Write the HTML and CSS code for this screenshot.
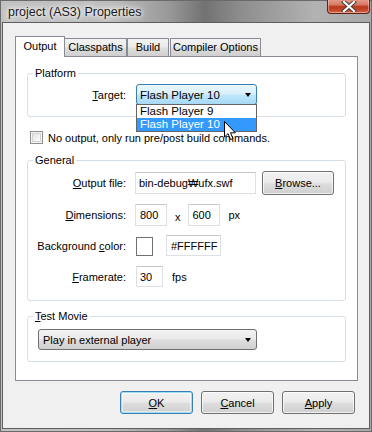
FILE: index.html
```html
<!DOCTYPE html>
<html>
<head>
<meta charset="utf-8">
<link rel="stylesheet" href="styles.css">
</head>
<body>
<div class="window">
  <div class="titlebar">
    <span class="title">project (AS3) Properties</span>
    <span class="close"><svg width="16" height="11" viewBox="0 0 16 11"><path d="M3 1 L13 10 M13 1 L3 10" stroke="#3a3a3a" stroke-width="4" stroke-linecap="square"/><path d="M3 1 L13 10 M13 1 L3 10" stroke="#ffffff" stroke-width="2.2" stroke-linecap="square"/></svg></span>
  </div>
  <div class="client">
    <div class="tabs">
      <div class="tab active">Output</div>
      <div class="tab t-class">Classpaths</div>
      <div class="tab t-build">Build</div>
      <div class="tab t-comp">Compiler Options</div>
    </div>
    <div class="panel">
      <fieldset class="group platform">
        <legend>Platform</legend>
        <div class="row">
          <span class="lbl"><u>T</u>arget:</span>
          <div class="combo-wrap">
            <div class="combo hot"><span>Flash Player 10</span><span class="arrow"></span></div>
            <div class="droplist">
              <div class="item">Flash Player 9</div>
              <div class="item sel">Flash Player 10</div>
            </div>
            <svg class="cursor" width="13" height="20" viewBox="0 0 13 20"><path d="M0.5 0.5 L0.5 16 L4 12.6 L6.6 18.6 L9 17.6 L6.5 11.8 L11.4 11.8 Z" fill="#ffffff" stroke="#000000" stroke-width="1"/></svg>
          </div>
        </div>
      </fieldset>
      <div class="check-row"><span class="checkbox"></span><span>No output, only run pre/post build commands.</span></div>
      <fieldset class="group general">
        <legend>General</legend>
        <div class="row r1">
          <span class="lbl"><u>O</u>utput file:</span>
          <div class="input w-file">bin-debug₩ufx.swf</div>
          <div class="btn browse"><u>B</u>rowse...</div>
        </div>
        <div class="row r2">
          <span class="lbl"><u>D</u>imensions:</span>
          <div class="input w-num">800</div>
          <span class="unit-x">x</span>
          <div class="input w-num">600</div>
          <span class="unit-px">px</span>
        </div>
        <div class="row r3">
          <span class="lbl">Background <u>c</u>olor:</span>
          <div class="swatch"></div>
          <div class="input w-color">#FFFFFF</div>
        </div>
        <div class="row r4">
          <span class="lbl"><u>F</u>ramerate:</span>
          <div class="input w-fps">30</div>
          <span class="unit-fps">fps</span>
        </div>
      </fieldset>
      <fieldset class="group test">
        <legend><u>T</u>est Movie</legend>
        <div class="test-body">
          <div class="combo normal"><span>Play in external player</span><span class="arrow"></span></div>
        </div>
      </fieldset>
    </div>
    <div class="buttons">
      <div class="btn dlg default"><u>O</u>K</div>
      <div class="btn dlg"><u>C</u>ancel</div>
      <div class="btn dlg"><u>A</u>pply</div>
    </div>
  </div>
</div>
</body>
</html>
```
FILE: styles.css
```css
* { box-sizing: border-box; }
html, body { margin: 0; padding: 0; }
body {
  width: 372px; height: 432px; overflow: hidden;
  font-family: "Liberation Sans", Arial, sans-serif;
  font-size: 11px; color: #000;
}
u { text-decoration: underline; text-underline-offset: 1px; }
.window {
  width: 372px; height: 432px;
  display: flex; flex-direction: column;
  background: linear-gradient(90deg, #c2c2c2 0%, #bcbcbc 30%, #9a9a9a 45%, #727272 55%, #8e8e8e 65%, #b2b2b2 85%, #a8a8a8 100%);
  border: 1px solid #6a6a6a;
}
.titlebar {
  height: 21px; flex: none;
  display: flex; justify-content: space-between; align-items: flex-start;
  padding-left: 7px;
}
.title {
  font-size: 12.5px; line-height: 20px; color: #1a1a1a; margin-top: 1px;
  text-shadow: 0 0 6px #f4f4f4, 0 0 10px #ffffff, 0 0 3px #ffffff;
  white-space: nowrap;
}
.close {
  width: 43px; height: 15px; margin-top: -2px; margin-right: 1px;
  border: 1px solid #5a2418; border-top: none;
  border-radius: 0 0 4px 4px;
  background: linear-gradient(#e6a08e 0%, #d77b66 40%, #bb3a1f 55%, #c4492c 80%, #d86a4c 100%);
  box-shadow: inset 0 0 0 1px rgba(255,210,200,0.5);
  display: flex; align-items: center; justify-content: center;
}
.close svg { display: block; margin-top: 1px; }
.client {
  flex: 1;
  margin: 0 1px 2px 1px;
  border: 1px solid #5e5e5e;
  background: #f0f0f0;
  padding: 13px 11px 0 12px;
  display: flex; flex-direction: column;
}
.tabs {
  display: flex; align-items: flex-end; height: 20px;
  position: relative; z-index: 2;
}
.tab {
  height: 18px;
  border: 1px solid #898c95; border-bottom: none;
  background: linear-gradient(#f2f2f2, #ebebeb 45%, #dddddd 55%, #cfcfcf);
  line-height: 17px;
  text-align: center;
  white-space: nowrap;
  margin-left: -1px;
}
.tab.active {
  width: 50px; height: 21px; margin-left: 0;
  margin-bottom: -1px;
  background: #ffffff;
  line-height: 19px;
  position: relative; z-index: 3;
}
.t-class { width: 63px; }
.t-build { width: 42px; margin-left: 0; }
.t-comp { width: 91px; margin-left: 1px; }
.panel {
  height: 325px;
  background: #ffffff;
  border: 1px solid #898c95;
  padding: 0 11px;
  position: relative; z-index: 1;
}
.group {
  margin: 0; padding: 0;
  border: 1px solid #d5dfe5;
  border-radius: 3px;
  min-width: 0;
}
.group legend {
  margin-left: 5px; padding: 0 2px;
  line-height: 14px;
}
.platform { margin-top: 9px; padding: 4px 0 11px 0; }
.row { display: flex; align-items: center; white-space: nowrap; }
.lbl { width: 98px; text-align: right; margin-right: 10px; flex: none; }
.combo-wrap { position: relative; }
.combo {
  height: 21px;
  display: flex; align-items: center; justify-content: space-between;
  padding: 0 5px 0 3px;
  border-radius: 3px;
}
.combo.hot {
  width: 121px;
  border: 1px solid #3c7fb1;
  background: linear-gradient(#eaf6fd 0%, #d9f0fc 45%, #bee6fd 55%, #a7d9f5 100%);
}
.combo.normal {
  width: 219px;
  border: 1px solid #707070;
  background: linear-gradient(#f2f2f2 0%, #ebebeb 45%, #dddddd 55%, #cfcfcf 100%);
  padding-left: 4px;
}
.arrow {
  width: 0; height: 0;
  border-left: 3.5px solid transparent; border-right: 3.5px solid transparent;
  border-top: 4px solid #000;
}
.droplist {
  position: absolute; left: 0; top: 20px;
  width: 121px;
  background: #fff;
  border: 1px solid #646464;
  z-index: 5;
}
.item { height: 13px; line-height: 13px; padding-left: 3px; font-size: 11.5px; }
.item.sel { background: #3399ff; color: #fff; }
.combo.hot span:first-child { font-size: 11.5px; }
.cursor { position: absolute; left: 88px; top: 37px; z-index: 6; }
.check-row {
  display: flex; align-items: center;
  height: 13px; margin-top: 14px; margin-left: 3px;
  white-space: nowrap;
}
.checkbox {
  width: 13px; height: 13px; margin-right: 5px; flex: none;
  border: 1px solid #8f8f8f;
  background: linear-gradient(135deg, #dcdcdc, #f4f4f4 60%, #ffffff);
  box-shadow: inset 0 0 0 1px #f4f4f4, inset 0 0 0 2px #d4d4d4;
}
.general { margin-top: 9px; padding: 4px 0 13px 0; }
.r1 { height: 24px; }
.r2 { height: 22px; margin-top: 9px; }
.r3 { height: 21px; margin-top: 9px; }
.r4 { height: 21px; margin-top: 10px; }
.input {
  background: #fff;
  border: 1px solid #dcdfe3; border-top-color: #c4c7cc;
  padding-left: 3px;
  display: flex; align-items: center;
  height: 100%;
}
.r1 .input { height: 22px; }
.r1 .lbl { margin-right: 9px; }
.r2 .lbl { margin-right: 9px; }
.w-file { width: 121px; }
.w-num { width: 32px; padding-left: 4px; }
.unit-x { margin: 3px 7px 0 8px; }
.unit-px { margin-left: 9px; }
.swatch {
  width: 17px; height: 19px;
  border: 1px solid #707070; background: #fff;
  margin-top: 1px;
}
.w-color { width: 55px; margin-left: 13px; padding-left: 4px; }
.w-fps { width: 27px; }
.unit-fps { margin-left: 9px; }
.btn {
  display: flex; align-items: center; justify-content: center;
  border: 1px solid #707070;
  border-radius: 3px;
  background: linear-gradient(#f2f2f2 0%, #ebebeb 45%, #dddddd 55%, #cfcfcf 100%);
  box-shadow: inset 0 0 0 1px rgba(255,255,255,0.7);
  white-space: nowrap;
}
.browse { width: 72px; height: 24px; margin-left: 6px; }
.test { margin-top: 8px; padding: 6px 0 11px 0; }
.test-body { padding-left: 10px; }
.buttons {
  display: flex; justify-content: flex-end; gap: 8px;
  margin-top: 10px; padding-right: 3px;
}
.btn.dlg { width: 73px; height: 23px; }
.btn.default {
  border-color: #3c7fb1;
  box-shadow: inset 0 0 0 1px #9fdcf7, inset 0 0 0 2px rgba(255,255,255,0.5);
}
```
